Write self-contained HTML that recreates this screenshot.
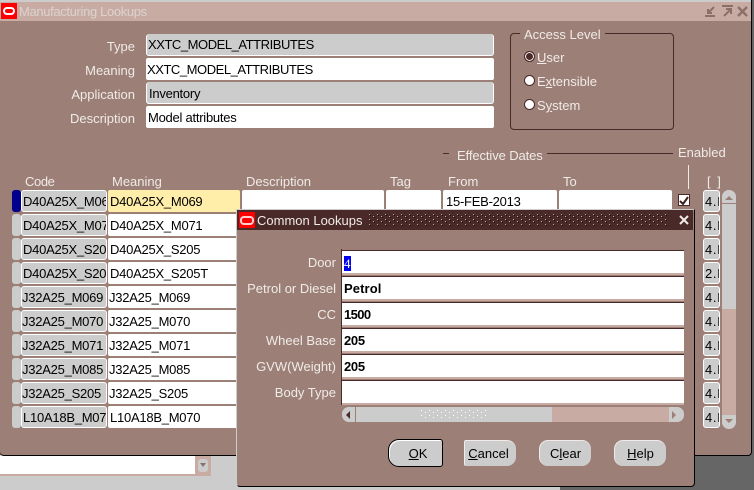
<!DOCTYPE html>
<html><head><meta charset="utf-8"><style>
html,body{margin:0;padding:0;width:754px;height:490px;overflow:hidden;background:#666}
*{box-sizing:border-box}
body{font:13px "Liberation Sans",sans-serif;color:#000;position:relative}
div,span.a{position:absolute}
.l{color:#f0ebe8;text-align:right;white-space:pre;height:16px;line-height:16px}
.t{color:#f0ebe8;white-space:pre;height:16px;line-height:16px}
.f{background:#fff;border-radius:2px;white-space:nowrap;overflow:hidden;line-height:23px;padding-left:2px;letter-spacing:-.25px}
.g{background:#ccc;border:1px solid #fff;border-radius:3px;line-height:21px;padding-left:1px;white-space:nowrap;overflow:hidden;letter-spacing:-.25px}
.x{letter-spacing:-.45px}
.n{left:703px;width:17px;height:22px;padding-left:1px;letter-spacing:.7px}
.i{background:#ccc;border-radius:3px;width:9px;left:12px;height:22px}
.d{background:#fff;border-top:1px solid #4a2a28;border-bottom:2px solid #c8aca4;left:342px;width:342px;height:25px;line-height:23px;padding-left:2px;font-weight:bold;letter-spacing:-.3px;white-space:nowrap}
.b{background:#ccc;text-align:center;border-radius:9px;top:440px;height:26px;line-height:26px}
.r{width:11px;height:11px;border-radius:50%;background:#fff;border:1px solid #4a2a28;left:524px}
u{text-decoration:underline}
</style></head><body>
<!-- background strip -->
<div style="left:0;top:455px;width:560px;height:35px;background:#ccc"></div>
<div style="left:0;top:456px;width:195px;height:18px;background:#fff"></div>
<div style="left:0;top:474px;width:211px;height:2px;background:#c8aca4"></div>
<div style="left:195px;top:456px;width:16px;height:20px;background:#c8aca4;border-radius:0 0 4px 4px"></div>
<div style="left:198px;top:459px;width:10px;height:13px;background:#ccc;border-radius:3px"></div>
<div style="left:200px;top:463px;width:0;height:0;border:3px solid transparent;border-top:4px solid #8a7068"></div>
<!-- main window -->
<div style="left:0;top:0;width:752px;height:456px;background:#9c7f76;border-right:1px solid #000;border-bottom:1px solid #000;border-radius:0 0 4px 4px"></div>
<div style="left:0;top:0;width:751px;height:2px;background:#ccc"></div>
<div style="left:0;top:2px;width:751px;height:19px;background:#c8aca4"></div>
<div style="left:1px;top:3px;width:16px;height:16px;background:#f00"></div>
<div style="left:3px;top:7px;width:12px;height:8px;border:2px solid #fff;border-radius:4px"></div>
<div class="t" style="left:19px;top:4px;color:#ddd2ce;letter-spacing:-.35px">Manufacturing Lookups</div>
<svg style="position:absolute;left:704px;top:4px" width="46" height="14" fill="none" stroke="#8a7068" stroke-width="2"><path d="M1 12H11M4 9L10 3M4 5V9H8"/><path d="M18 2H29M22 5H27V10M27 5L20 12"/><path d="M34 3L43 12M43 3L34 12" stroke-width="2.4"/></svg>

<div class="l" style="left:60px;width:75px;top:39px">Type</div>
<div class="l" style="left:60px;width:75px;top:63px">Meaning</div>
<div class="l" style="left:60px;width:75px;top:87px">Application</div>
<div class="l" style="left:60px;width:75px;top:111px">Description</div>
<div class="g x" style="left:146px;top:34px;width:348px;height:22px;border-width:0 1px 1px 1px">XXTC_MODEL_ATTRIBUTES</div>
<div class="f x" style="left:146px;top:58px;width:348px;height:22px;padding-left:1px">XXTC_MODEL_ATTRIBUTES</div>
<div class="g" style="left:146px;top:82px;width:348px;height:22px;border-width:0 1px 1px 1px;padding-left:2px;line-height:23px">Inventory</div>
<div class="f" style="left:146px;top:106px;width:348px;height:22px">Model attributes</div>

<!-- access level -->
<div style="left:510px;top:33px;width:164px;height:97px;border:1px solid #4a2a28;border-radius:4px"></div>
<div class="t" style="left:520px;top:27px;background:#9c7f76;padding:0 4px">Access Level</div>
<div class="r" style="top:51px;background:#4a2a28;box-shadow:inset 0 0 0 1px #fff"></div>
<div class="r" style="top:75px"></div>
<div class="r" style="top:99px"></div>
<div class="t" style="left:537px;top:50px"><u>U</u>ser</div>
<div class="t" style="left:537px;top:74px">E<u>x</u>tensible</div>
<div class="t" style="left:537px;top:98px">S<u>y</u>stem</div>

<!-- table headers -->
<div style="left:443px;top:153px;width:6px;height:1px;background:#4a2a28"></div>
<div class="t" style="left:457px;top:148px;letter-spacing:-.1px">Effective Dates</div>
<div style="left:547px;top:153px;width:126px;height:1px;background:#4a2a28"></div>
<div class="t" style="left:678px;top:145px">Enabled</div>
<div style="left:688px;top:165px;width:1px;height:24px;background:#f0ebe8"></div>
<div class="t" style="left:25px;top:174px;letter-spacing:-.4px">Code</div>
<div class="t" style="left:112px;top:174px">Meaning</div>
<div class="t" style="left:246px;top:174px">Description</div>
<div class="t" style="left:390px;top:174px">Tag</div>
<div class="t" style="left:448px;top:174px">From</div>
<div class="t" style="left:563px;top:174px">To</div>
<div class="t" style="left:707px;top:174px;letter-spacing:1.5px">[ ]</div>

<!-- rows -->
<div class="i" style="top:190px;background:#00008c"></div>
<div class="i" style="top:214px"></div><div class="i" style="top:238px"></div><div class="i" style="top:262px"></div><div class="i" style="top:286px"></div><div class="i" style="top:310px"></div><div class="i" style="top:334px"></div><div class="i" style="top:358px"></div><div class="i" style="top:382px"></div><div class="i" style="top:406px"></div>

<div class="g" style="left:21px;top:190px;width:86px;height:22px;padding-left:1px">D40A25X_M069</div>
<div class="g" style="left:21px;top:214px;width:86px;height:22px;padding-left:1px">D40A25X_M071</div>
<div class="g" style="left:21px;top:238px;width:86px;height:22px;padding-left:1px">D40A25X_S205</div>
<div class="g" style="left:21px;top:262px;width:86px;height:22px;padding-left:1px">D40A25X_S205T</div>
<div class="g" style="left:21px;top:286px;width:86px;height:22px;padding-left:0">J32A25_M069</div>
<div class="g" style="left:21px;top:310px;width:86px;height:22px;padding-left:0">J32A25_M070</div>
<div class="g" style="left:21px;top:334px;width:86px;height:22px;padding-left:0">J32A25_M071</div>
<div class="g" style="left:21px;top:358px;width:86px;height:22px;padding-left:0">J32A25_M085</div>
<div class="g" style="left:21px;top:382px;width:86px;height:22px;padding-left:0">J32A25_S205</div>
<div class="g" style="left:21px;top:406px;width:86px;height:22px;padding-left:1px">L10A18B_M070</div>

<div class="f" style="left:108px;top:190px;width:132px;height:22px;background:#ffeeaa">D40A25X_M069</div>
<div class="f" style="left:108px;top:214px;width:132px;height:22px">D40A25X_M071</div>
<div class="f" style="left:108px;top:238px;width:132px;height:22px">D40A25X_S205</div>
<div class="f" style="left:108px;top:262px;width:132px;height:22px">D40A25X_S205T</div>
<div class="f" style="left:108px;top:286px;width:132px;height:22px;padding-left:1px">J32A25_M069</div>
<div class="f" style="left:108px;top:310px;width:132px;height:22px;padding-left:1px">J32A25_M070</div>
<div class="f" style="left:108px;top:334px;width:132px;height:22px;padding-left:1px">J32A25_M071</div>
<div class="f" style="left:108px;top:358px;width:132px;height:22px;padding-left:1px">J32A25_M085</div>
<div class="f" style="left:108px;top:382px;width:132px;height:22px;padding-left:1px">J32A25_S205</div>
<div class="f" style="left:108px;top:406px;width:132px;height:22px">L10A18B_M070</div>

<div class="f" style="left:242px;top:190px;width:142px;height:22px"></div>
<div class="f" style="left:386px;top:190px;width:55px;height:22px"></div>
<div class="f" style="left:443px;top:190px;width:114px;height:22px;padding-left:3px">15-FEB-2013</div>
<div class="f" style="left:559px;top:190px;width:113px;height:22px"></div>
<div style="left:678px;top:194px;width:12px;height:12px;background:#fff;border:1px solid #4a2a28"></div>
<svg style="position:absolute;left:679px;top:195px" width="11" height="11" fill="none" stroke="#3a1f1d" stroke-width="2"><path d="M1 6L4 9L9 2"/></svg>

<div class="g n" style="top:190px">4.F</div>
<div class="g n" style="top:214px">4.F</div>
<div class="g n" style="top:238px">4.F</div>
<div class="g n" style="top:262px">2.F</div>
<div class="g n" style="top:286px">4.D</div>
<div class="g n" style="top:310px">4.D</div>
<div class="g n" style="top:334px">4.D</div>
<div class="g n" style="top:358px">4.D</div>
<div class="g n" style="top:382px">4.D</div>
<div class="g n" style="top:406px">4.D</div>

<!-- vertical scrollbar -->
<div style="left:722px;top:190px;width:14px;height:239px;background:#c8aca4;border-radius:7px"></div>
<div style="left:722px;top:190px;width:14px;height:119px;background:#ccc;border-radius:7px 7px 0 0"></div>
<div style="left:722px;top:415px;width:14px;height:14px;background:#ccc;border-radius:0 0 7px 7px"></div>
<div style="left:725px;top:196px;width:0;height:0;border:4px solid transparent;border-bottom:4px solid #9c7f76;border-top:0"></div>
<div style="left:725px;top:419px;width:0;height:0;border:4px solid transparent;border-top:4px solid #9c7f76;border-bottom:0"></div>
<div style="left:722px;top:203px;width:14px;height:1px;background:#9c7f76"></div>

<!-- dialog -->
<div style="left:236px;top:209px;width:459px;height:278px;background:#9c7f76;border-left:1px solid #ccc;border-top:1px solid #ccc;border-right:1px solid #000;border-bottom:1px solid #000;border-radius:0 0 4px 4px"></div>
<div style="left:237px;top:210px;width:456px;height:20px;background:#4a2a28"></div>
<div style="left:239px;top:212px;width:16px;height:16px;background:#f00"></div>
<div style="left:240px;top:216px;width:14px;height:9px;border:2px solid #ffd0d0;border-radius:4px"></div>
<div class="t" style="left:257px;top:213px">Common Lookups</div>
<svg style="position:absolute;left:368px;top:214px" width="299" height="12"><defs><pattern id="p" width="8" height="5" patternUnits="userSpaceOnUse"><rect x="1" y="0" width="1" height="1" fill="#c8aca4"/><rect x="5" y="2" width="1" height="1" fill="#c8aca4"/><rect x="2" y="1" width="1" height="1" fill="#111"/><rect x="6" y="3" width="1" height="1" fill="#111"/></pattern></defs><rect width="299" height="12" fill="url(#p)"/></svg>
<svg style="position:absolute;left:678px;top:214px" width="12" height="12" fill="none" stroke="#f0ebe8" stroke-width="2"><path d="M2 2L10 10M10 2L2 10"/></svg>

<div class="l" style="left:240px;width:96px;top:255px">Door</div>
<div class="l" style="left:240px;width:96px;top:281px">Petrol or Diesel</div>
<div class="l" style="left:240px;width:96px;top:307px">CC</div>
<div class="l" style="left:240px;width:96px;top:333px">Wheel Base</div>
<div class="l" style="left:240px;width:96px;top:359px">GVW(Weight)</div>
<div class="l" style="left:240px;width:96px;top:385px">Body Type</div>
<div style="left:341px;top:249px;width:1px;height:156px;background:#4a2a28"></div>
<div class="d" style="top:250px"><span style="background:#0000f0;color:#fff;display:inline-block;width:7px;height:15px;line-height:15px;font-weight:normal;font-family:'Liberation Serif',serif;vertical-align:middle">4</span></div>
<div class="d" style="top:276px;letter-spacing:.1px">Petrol</div>
<div class="d" style="top:302px;letter-spacing:-.6px">1500</div>
<div class="d" style="top:328px">205</div>
<div class="d" style="top:354px">205</div>
<div class="d" style="top:380px"></div>

<!-- horizontal scrollbar -->
<div style="left:342px;top:407px;width:342px;height:15px;background:#c8aca4;border-radius:7px"></div>
<div style="left:342px;top:407px;width:210px;height:15px;background:#ccc;border-radius:7px 0 0 7px"></div>
<div style="left:355px;top:407px;width:1px;height:15px;background:#9c7f76"></div>
<div style="left:669px;top:407px;width:15px;height:15px;background:#ccc;border-radius:0 7px 7px 0"></div>
<div style="left:346px;top:411px;width:0;height:0;border:4px solid transparent;border-right:4px solid #4a2a28;border-left:0"></div>
<div style="left:672px;top:411px;width:0;height:0;border:4px solid transparent;border-left:4px solid #9c7f76;border-right:0"></div>
<svg style="position:absolute;left:420px;top:410px" width="68" height="9"><defs><pattern id="q" width="8" height="5" patternUnits="userSpaceOnUse"><rect x="1" y="0" width="1" height="1" fill="#fff"/><rect x="5" y="2" width="1" height="1" fill="#fff"/></pattern></defs><rect width="68" height="9" fill="url(#q)"/></svg>

<!-- buttons -->
<div class="b" style="left:388px;top:439px;width:55px;height:28px;line-height:28px;border:1px solid #000;border-radius:11px 3px 3px 11px;box-shadow:inset 1px 1px 0 #fff;padding-left:5px"><u>O</u>K</div>
<div class="b" style="left:464px;width:52px;border-top:1px solid #f0ebe8;border-left:1px solid #f0ebe8;border-radius:2px 9px 9px 2px;padding-right:4px"><u>C</u>ancel</div>
<div class="b" style="left:539px;width:52px;border-top:1px solid #f0ebe8;border-left:1px solid #f0ebe8">C<u>l</u>ear</div>
<div class="b" style="left:614px;width:52px;border-top:1px solid #f0ebe8;border-left:1px solid #f0ebe8"><u>H</u>elp</div>
</body></html>
